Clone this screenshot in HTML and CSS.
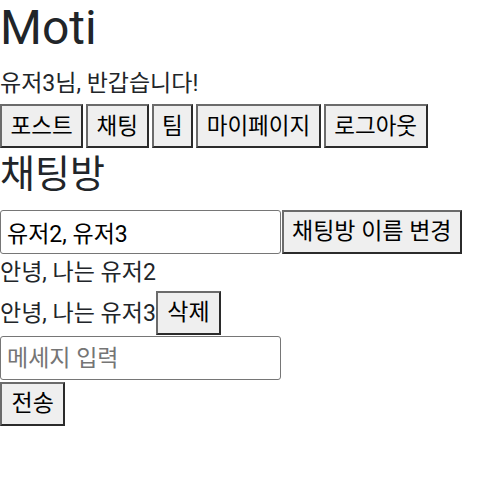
FILE: index.html
```html
<!DOCTYPE html>
<html lang="ko">
<head>
<meta charset="utf-8">
<link rel="stylesheet" href="styles.css">
</head>
<body>
<div class="app">
  <h1 class="title">Moti</h1>
  <p class="greet">유저3님, 반갑습니다!</p>
  <nav class="nav">
    <button class="btn">포스트</button>
    <button class="btn">채팅</button>
    <button class="btn">팀</button>
    <button class="btn">마이페이지</button>
    <button class="btn">로그아웃</button>
  </nav>
  <h2 class="subtitle">채팅방</h2>
  <div class="row">
    <input class="field" type="text" value="유저2, 유저3">
    <button class="btn btn-chat btn-rename">채팅방 이름 변경</button>
  </div>
  <div class="msg">안녕, 나는 유저2</div>
  <div class="msg row"><span>안녕, 나는 유저3</span><button class="btn btn-chat">삭제</button></div>
  <div class="row input-row">
    <input class="field" type="text" placeholder="메세지 입력">
  </div>
  <div class="row send">
    <button class="btn btn-chat">전송</button>
  </div>
</div>
</body>
</html>
```
FILE: styles.css
```css
html, body {
  margin: 0;
  padding: 0;
  background: #fff;
}
body {
  font-family: Roboto, "Noto Sans CJK KR", sans-serif;
  font-size: 23px;
  color: #212529;
  line-height: 1.5;
}
.title {
  font-size: 48px;
  font-weight: 400;
  line-height: 56px;
  margin: 0 0 8px 0;
}
.greet {
  margin: 0;
  line-height: 40px;
}
.nav {
  display: flex;
  gap: 3px;
}
.btn {
  font-family: Roboto, "Noto Sans CJK KR", sans-serif;
  font-size: 22.5px;
  color: #000;
  background: #efefef;
  border: 2px solid;
  border-color: #6b6b6b #2b2b2b #2b2b2b #6b6b6b;
  padding: 5px 8.5px;
  height: 44px;
  line-height: 30px;
  margin: 0;
}
.btn-chat {
  font-size: 23px;
  padding: 5px 9.5px;
}
.btn-rename {
  padding: 5px 8px;
}
.subtitle {
  font-size: 38px;
  font-weight: 400;
  line-height: 52px;
  margin: 0 0 10px 0;
}
.row {
  display: flex;
  align-items: center;
  gap: 1px;
}
.field {
  width: 281px;
  height: 44px;
  box-sizing: border-box;
  border: 1px solid #767676;
  border-radius: 3px;
  padding: 0 6px;
  font-family: Roboto, "Noto Sans CJK KR", sans-serif;
  font-size: 23px;
  color: #000;
  margin: 0;
}
.field::placeholder {
  color: #757575;
}
.msg {
  line-height: 37px;
}
.msg.row {
  gap: 0;
}
.input-row {
  margin-top: 1px;
}
.send {
  margin-top: 2px;
}
```
